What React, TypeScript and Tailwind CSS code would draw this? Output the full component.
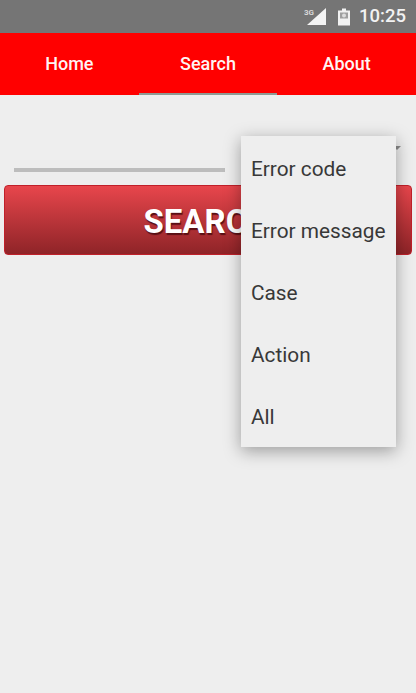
const tabs = ["Home", "Search", "About"];
const options = ["Error code", "Error message", "Case", "Action", "All"];

const App = () => {
  return (
    <div className="relative flex h-[693px] w-[416px] flex-col overflow-hidden bg-[#eeeeee] font-['Roboto',sans-serif]">
      {/* status bar */}
      <div className="flex h-[33px] items-center justify-end bg-[#757575] pr-[10px] text-[#f2f2f2]">
        <svg width="24" height="20" viewBox="0 0 24 20" className="mr-[9px]">
          <path d="M3 18 L22 1 V18 Z" fill="#f4f4f4" />
          <text x="0" y="8" fontSize="8" fontWeight="700" fill="#d8d8d8">3G</text>
        </svg>
        <svg width="14" height="18" viewBox="0 0 14 18" className="mr-[8px]">
          <path d="M5 0.5 H9 V2.5 H13 V17.5 H1 V2.5 H5 Z" fill="#f2f2f2" />
          <rect x="3" y="4.5" width="8" height="6" fill="#a0a0a0" />
          <circle cx="7" cy="7.5" r="2" fill="#dddddd" />
        </svg>
        <span className="text-[18.5px] font-medium leading-none">10:25</span>
      </div>

      {/* tabs */}
      <div className="flex h-[62px] bg-[#ff0000]">
        {tabs.map((tab, i) => (
          <div
            key={tab}
            className={
              i === 1
                ? "flex flex-1 items-center justify-center border-b-[2px] border-[#8f9a94] text-[18px] font-medium text-[#fff4f4]"
                : "flex flex-1 items-center justify-center border-b-[2px] border-transparent text-[18px] font-medium text-[#fff4f4]"
            }
          >
            {tab}
          </div>
        ))}
      </div>

      {/* search form */}
      <div className="relative flex flex-col px-[4px] pt-[73px]">
        <div className="ml-[10px] h-[4px] w-[211px] bg-[#bdbdbd]" />
        <div className="mt-[13px] flex h-[70px] w-[408px] items-center justify-center rounded-[4px] border border-[#c0202a] bg-gradient-to-b from-[#e8464c] to-[#8f2428] pt-[3px] pr-[2px] text-[33px] font-bold text-white [text-shadow:1px_2px_1px_#5a1015]">
          SEARCH
        </div>
      </div>

      {/* spinner arrow, mostly behind the dropdown */}
      <div className="absolute left-[393px] top-[146px] h-0 w-0 border-x-[4px] border-t-[4px] border-x-transparent border-t-[#8a8a8a]" />

      {/* spinner dropdown */}
      <div className="absolute left-[241px] top-[136px] flex w-[155px] flex-col bg-[#eeeeee] shadow-[0_4px_16px_rgba(0,0,0,0.35)]">
        {options.map((option) => (
          <div
            key={option}
            className="flex h-[62.2px] items-center pl-[10px] pt-[4px] text-[20.8px] text-[#383838]"
          >
            {option}
          </div>
        ))}
      </div>
    </div>
  );
};

export default App;
